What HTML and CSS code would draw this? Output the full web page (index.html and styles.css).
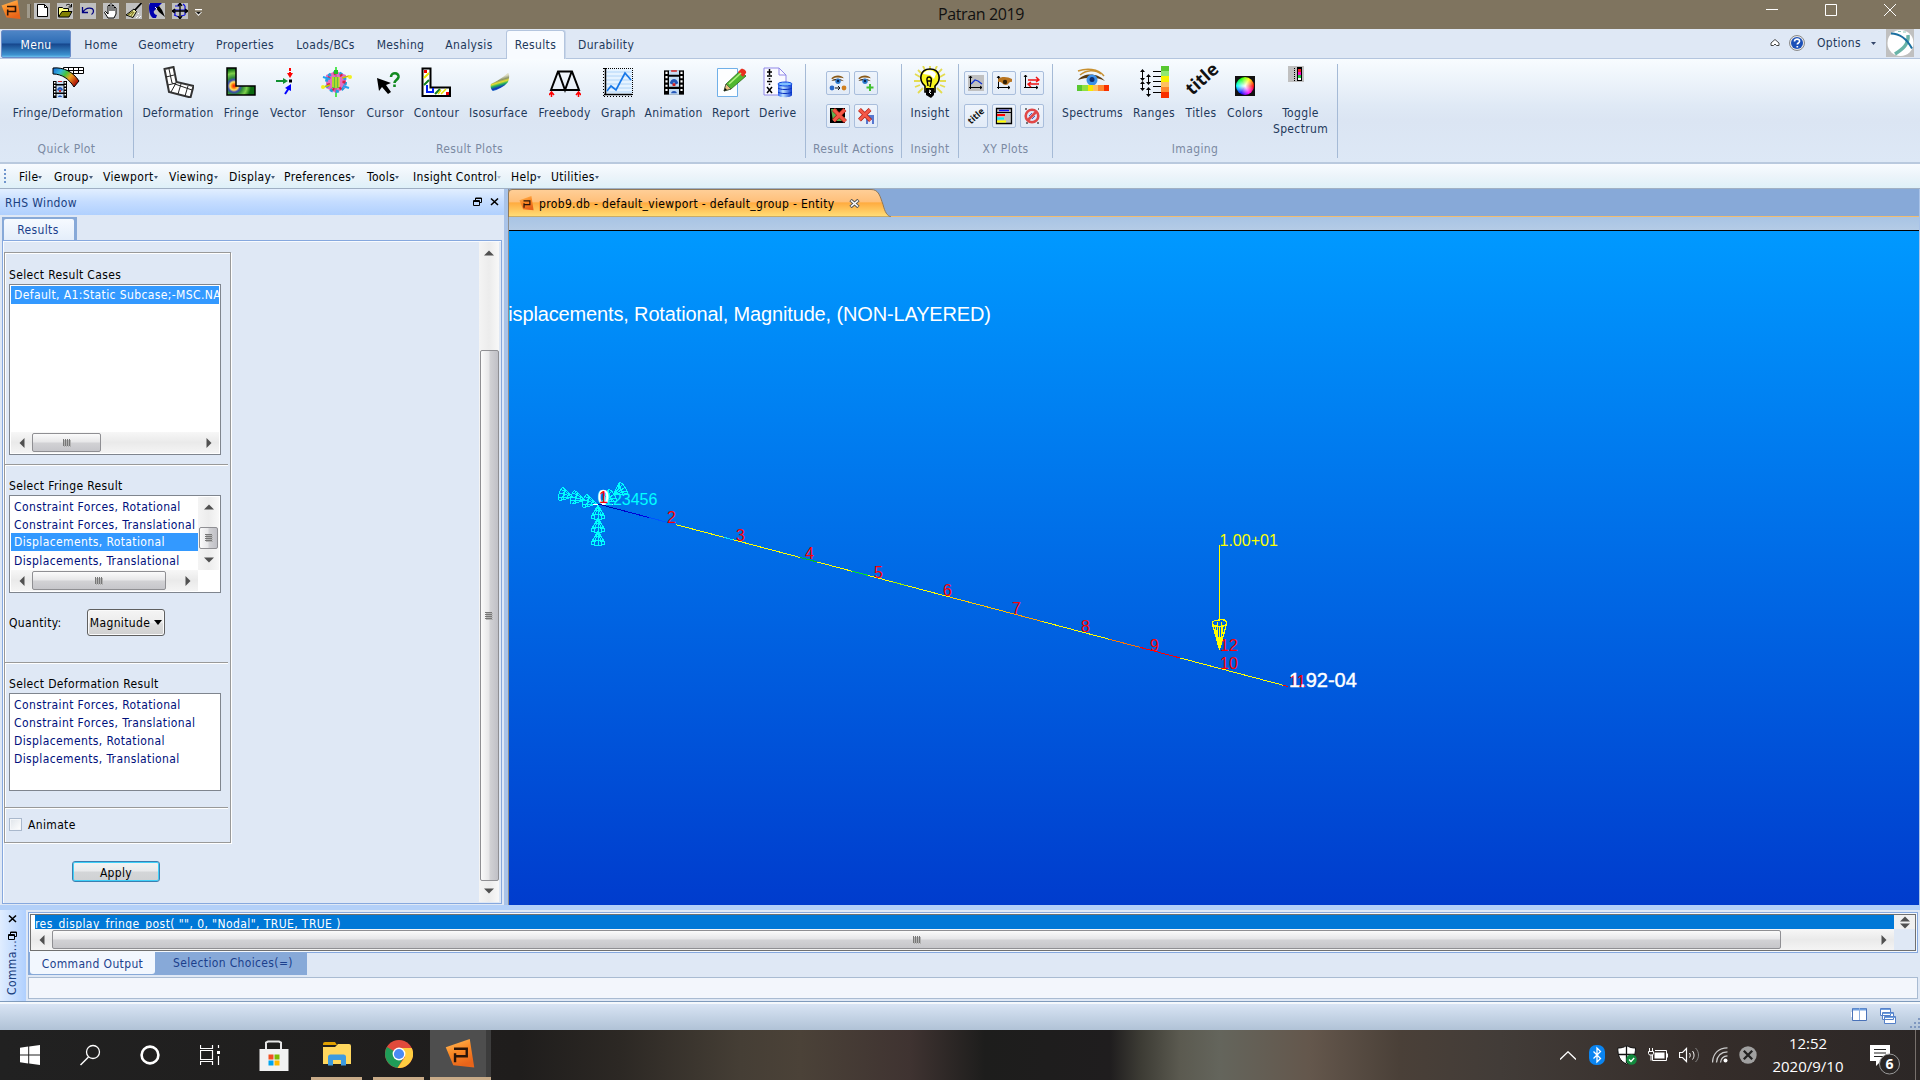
FILE: index.html
```html
<!DOCTYPE html>
<html lang="en">
<head>
<meta charset="utf-8">
<title>Patran 2019</title>
<link rel="stylesheet" href="styles.css">
</head>
<body>
<svg class="defs" width="0" height="0">
  <defs>
    <linearGradient id="orange" x1="0" y1="0" x2="0.4" y2="1"><stop offset="0" stop-color="#ffc060"/><stop offset=".5" stop-color="#fb8a26"/><stop offset="1" stop-color="#e8641a"/></linearGradient>
    <linearGradient id="rainbow" x1="0" y1="0" x2="1" y2=".6"><stop offset="0" stop-color="#1565d8"/><stop offset=".3" stop-color="#35b6d8"/><stop offset=".5" stop-color="#46c43a"/><stop offset=".7" stop-color="#f0a020"/><stop offset="1" stop-color="#b01808"/></linearGradient>
    <radialGradient id="fringe" gradientUnits="userSpaceOnUse" cx="9" cy="20" r="17"><stop offset="0" stop-color="#f01010"/><stop offset=".14" stop-color="#ff8a10"/><stop offset=".24" stop-color="#ffe060"/><stop offset=".36" stop-color="#3a4ab0"/><stop offset=".5" stop-color="#2f8a3a"/><stop offset=".75" stop-color="#7ed04a"/><stop offset="1" stop-color="#0c6a10"/></radialGradient>
    <linearGradient id="iso" x1=".2" y1="0" x2=".5" y2="1"><stop offset=".3" stop-color="#dcdcc4"/><stop offset=".45" stop-color="#8c9468"/><stop offset=".56" stop-color="#e8e030"/><stop offset=".68" stop-color="#20b060"/><stop offset=".82" stop-color="#1030c0"/><stop offset="1" stop-color="#30c0d0"/></linearGradient>
    <linearGradient id="db" x1="0" x2="1"><stop offset="0" stop-color="#2a62f0"/><stop offset=".35" stop-color="#c0e4ff"/><stop offset="1" stop-color="#0838d0"/></linearGradient>
    <symbol id="logo" viewBox="0 0 20 20"><path d="M0.500 5.500 16.500 0 19.500 19 5.500 17.500Z" fill="url(#orange)"/><path d="M6 6.500h8.500v5H6.700M6.700 9.500v6" fill="none" stroke="#2a1408" stroke-width="1.600"/></symbol>
    <symbol id="restore" viewBox="0 0 9 9"><path d="M2.500 3V1h6v4.500H6.500M.5 3.500h6v5h-6zM.5 4.500h6M2.500 1.500h6" fill="none" stroke="#000"/></symbol>
    <symbol id="close" viewBox="0 0 9 9"><path d="M1 1.500 8 8M8 1.500 1 8" stroke="#000" stroke-width="1.600"/></symbol>
    <symbol id="film" viewBox="0 0 14 17"><path d="M0 0h14v17H0z" fill="#000"/><path d="M3.500 0h7v3h-7zM3.500 4.500h7v7h-7zM3.500 13h7v4h-7z" fill="#c4dcf4"/><path d="M1 1h1.500v1.500H1zM1 4h1.500v1.500H1zM1 7h1.500v1.500H1zM1 10h1.500v1.500H1zM1 13h1.500v1.500H1zM11.500 1H13v1.500h-1.500zM11.500 4H13v1.500h-1.500zM11.500 7H13v1.500h-1.500zM11.500 10H13v1.500h-1.500zM11.500 13H13v1.500h-1.500z" fill="#fff"/><path d="M4 9c1-4 5-4 6 0l-2 1-1-2-1 2zM5 16c0-2 4-2 4 0z" fill="#2456b8"/><path d="M6 9h2v2H6zM5 0h4v1H5z" fill="#d02020"/></symbol>
    <symbol id="eye" viewBox="0 0 16 12"><path d="M0 4C3 0 12-1 15 4 11 3 5 2 1 5z" fill="#8a5a18"/><path d="M0 7C3 3.500 12 3.500 15 7.500 11 6 5 6 0 7z" fill="#4a2c08"/><circle cx="8" cy="7.500" r="3.200" fill="#2c7ad0"/><circle cx="8" cy="7.200" r="1.400" fill="#082048"/></symbol>
    <symbol id="redx" viewBox="0 0 14 14"><path d="M1.500 1.500 12.500 12.500M12 1.500 1.500 12" stroke="#a81c10" stroke-width="4"/><path d="M1.500 1.500 12.500 12.500M12 1.500 1.500 12" stroke="#f45848" stroke-width="2.800"/></symbol>
    <symbol id="arl" viewBox="0 0 6 10"><path d="M5.500 0v10L.5 5z" fill="#505050"/></symbol>
    <symbol id="arr" viewBox="0 0 6 10"><path d="M.5 0v10l5-5z" fill="#505050"/></symbol>
    <symbol id="aru" viewBox="0 0 10 6"><path d="M0 5.500h10L5 .5z" fill="#505050"/></symbol>
    <symbol id="ard" viewBox="0 0 10 6"><path d="M0 .5h10l-5 5z" fill="#505050"/></symbol>
    <symbol id="griph" viewBox="0 0 8 8"><path d="M.5 0v7M2.500 0v7M4.500 0v7M6.500 0v7" stroke="#777"/><path d="M1.500 1v7M3.500 1v7M5.500 1v7M7.500 1v7" stroke="#a8a8a8" stroke-width=".8"/></symbol>
    <symbol id="gripv" viewBox="0 0 8 8"><path d="M0 .5h7M0 2.500h7M0 4.500h7M0 6.500h7" stroke="#777"/><path d="M1 1.500h7M1 3.500h7M1 5.500h7M1 7.500h7" stroke="#a8a8a8" stroke-width=".8"/></symbol>
  </defs>
</svg>

<header class="titlebar">
  <svg class="app-logo" width="20" height="20"><use href="#logo"/></svg>
  <div class="quick">
    <svg width="16" height="16" viewBox="0 0 16 16"><path d="M0 0h16v16H0z" fill="#c0c0c0"/><path d="M3.500 1.500h7l3 3v9h-10z" fill="#fff" stroke="#000"/><path d="M10.500 1.500v3h3" fill="none" stroke="#000"/></svg>
    <svg width="16" height="16" viewBox="0 0 16 16"><path d="M0 0h16v16H0z" fill="#c0c0c0"/><path d="M1.500 13.500V4.500h4l1 1h5v3" fill="#ffff80" stroke="#000"/><path d="M1.500 14 5 8.500h10L12 14z" fill="#808000" stroke="#000"/><path d="M9 2.500c2-2 4-1 5 1M14.500 1v3h-3" fill="none" stroke="#000"/></svg>
    <svg width="16" height="16" viewBox="0 0 16 16"><path d="M0 0h16v16H0z" fill="#c0c0c0"/><path d="M2.500 4v5.500H8M3 9C6 4 13 4 13.500 8c0 2-1 3-2 3.500" fill="none" stroke="#000080" stroke-width="1.300"/></svg>
    <svg width="16" height="16" viewBox="0 0 16 16"><path d="M0 0h16v16H0z" fill="#c0c0c0"/><path d="M5 15 1.500 9.500l1-1L5 11V3l1-1 1 1V1.500l1-1 1 1V3l1-1 1 1v2l1-1 1 1v6l-2 4z" fill="#fff" stroke="#000"/><path d="M7 3v5M9 3v5M11 5v3" stroke="#000"/></svg>
    <svg width="16" height="16" viewBox="0 0 16 16"><path d="M0 0h16v16H0z" fill="#c0c0c0"/><path d="M15.500 0 9 7" stroke="#000" stroke-width="1.800"/><path d="M8 6l2.500 2.500L7 14.500 0 12z" fill="#e8e8a0" stroke="#000"/><path d="M2 12l5-3.500M4.500 13.500 8 9" stroke="#807820" stroke-width="1.200"/><path d="M10 15l2-2M13 15l2-2M12 11l1-1" stroke="#fff"/></svg>
    <svg width="16" height="16" viewBox="0 0 16 16"><path d="M0 0h16v16H0z" fill="#c0c0c0"/><path d="M1 0h12L5 8c-1 2 1 4 3 4l-1 3H4C0 13-1 3 1 0z" fill="#0000b0"/><path d="M7 5l3-2 3 4 3 7-6-5z" fill="#000"/><path d="M6 4l2 2" stroke="#fff"/></svg>
    <svg width="16" height="16" viewBox="0 0 16 16"><path d="M0 0h16v16H0z" fill="#c0c0c0"/><path d="M3 3h4l-1-2M3 7h11M13 3v9M3 12V6M9 13l4-1M2 12l5 2M11 1l2 2" stroke="#1010e0" fill="none" stroke-width="1.200"/><path d="M8 0v16M0 8h16M6 3l2-3 2 3M6 13l2 3 2-3M3 6 0 8l3 2M13 6l3 2-3 2" stroke="#000" fill="none" stroke-width="1.300"/></svg>
    <svg class="quick-more" width="7" height="8" viewBox="0 0 7 8"><path d="M0 .5h7" stroke="#fff" stroke-width="1.500"/><path d="M0 3h7L3.500 7z" fill="#fff"/><path d="M1 3h5L3.500 5.500z" fill="#111"/></svg>
  </div>
  <div class="app-title">Patran 2019</div>
  <div class="winbtns">
    <svg width="12" height="12" viewBox="0 0 12 12"><path d="M0 5.500h12" stroke="#fff"/></svg>
    <svg width="12" height="12" viewBox="0 0 12 12"><path d="M.5.5h11v11H.5z" stroke="#fff" fill="none"/></svg>
    <svg width="12" height="12" viewBox="0 0 12 12"><path d="M0 0 12 12M12 0 0 12" stroke="#fff"/></svg>
  </div>
</header>

<nav class="tabs">
  <div class="tab-menu">Menu</div>
  <div class="tab-list">
    <span class="w32">Home</span><span class="w55">Geometry</span><span class="w58">Properties</span><span class="w59">Loads/BCs</span><span class="w47">Meshing</span><span class="w46">Analysis</span>
  </div>
  <div class="tab-active">Results</div>
  <span class="tab-last">Durability</span>
  <div class="tab-right">
    <svg width="10" height="8" viewBox="0 0 10 8"><path d="M1 6.500V4l4-3.500L9 4v2.500H6.500L5 5 3.500 6.500z" fill="#fff" stroke="#444"/></svg>
    <svg class="help" width="16" height="16" viewBox="0 0 16 16"><circle cx="8" cy="8" r="7.500" fill="#e8e8e8" stroke="#8a8a8a"/><circle cx="8" cy="8" r="6" fill="#1c50b8"/><path d="M5.500 6.500C5.500 3 11 3.500 10.500 6.500 10.300 8 8.300 8 8.300 9.500M8.300 11v1.500" fill="none" stroke="#fff" stroke-width="1.700"/></svg>
    <span class="options">Options</span>
    <svg class="opt-arrow" width="5" height="3" viewBox="0 0 5 3"><path d="M0 0h5L2.500 3z" fill="#34466a"/></svg>
    <svg width="28" height="28" viewBox="0 0 28 28"><path d="M0 0h28v28H0z" fill="#c0c0c0"/><circle cx="14.500" cy="14" r="13" fill="#fff"/><path d="M9 25c8-5 14-10 13-19" fill="none" stroke="#6ab4a8" stroke-width="3.500"/><path d="M5 4.500c8 0 15 4 21 15" fill="none" stroke="#1a6fa0" stroke-width="2"/><path d="M12 2.500h3M17 3h3" stroke="#8cc8b8"/></svg>
  </div>
</nav>

<section class="ribbon">
  <div class="group g1">
    <div class="items">
      <div class="item w110">
        <svg width="32" height="32" viewBox="0 0 32 32"><path d="M11.500 1.500h20v6h-20zM11.500 4.500h20M16.500 1.500v6M21.500 1.500v6M26.500 1.500v6" fill="#fff" stroke="#000"/><path d="M1 2c11-1 20 4 26 13l-5 6C17 13 10 8 1 8z" fill="url(#rainbow)" stroke="#000"/><svg x="1" y="15" width="14" height="17"><use href="#film"/></svg></svg>
        <span>Fringe/Deformation</span>
      </div>
    </div>
    <div class="caption">Quick Plot</div>
  </div>
  <div class="group g2">
    <div class="items">
      <div class="item w70"><svg width="32" height="32" viewBox="0 0 32 32"><path d="M2.500 3 11.500 1l3 15 17 4-3 11.500L7 26z" fill="#fff" stroke="#333" stroke-width="2"/><path d="M4 11l8-2M6 19l8-2M7 3l3 14 20 7M9 26l5-9M16 28l3-10M23 30l3-10" fill="none" stroke="#222"/></svg><span>Deformation</span></div>
      <div class="item w37"><svg width="32" height="32" viewBox="0 0 32 32"><path d="M2 2h9v18h19v9H2z" fill="url(#fringe)" stroke="#000" stroke-width="1.500"/></svg><span>Fringe</span></div>
      <div class="item w37"><svg width="32" height="32" viewBox="0 0 32 32"><path d="M18 2v6" stroke="#f00" stroke-width="2" stroke-dasharray="3 1"/><path d="M15 7h6l-3 5z" fill="#f00"/><path d="M4 15h8" stroke="#109030" stroke-width="2"/><path d="M11 12v6l5-3z" fill="#109030"/><path d="M17 13.500h3v3h-3z"/><path d="M13 28l4-6" stroke="#00f" stroke-width="2"/><path d="M13 22l6-4 0 7z" fill="#00f"/></svg><span>Vector</span></div>
      <div class="item w40"><svg width="32" height="32" viewBox="0 0 32 32"><path d="M16 1v30" stroke="#20e020" stroke-width="1.500"/><path d="M16 5l10 4v13l-10 5-10-5V9z" fill="#e040b0" opacity=".75"/><circle cx="16" cy="16" r="9.500" fill="none" stroke="#20a0e0" stroke-width="3" stroke-dasharray="3 3"/><circle cx="16" cy="15.500" r="8" fill="none" stroke="#e02040" stroke-width="3" stroke-dasharray="2 5"/><path d="M12 11h7v11h-7z" fill="#60c040"/><path d="M13 11v10M16 11v11M19 11v10" stroke="#e8e820" stroke-width="1.200"/><path d="M4 21l6-2M22 12l7-2" stroke="#d0c000" stroke-width="1.500"/><circle cx="3" cy="21" r="2" fill="#f0f020"/><circle cx="30" cy="11" r="2" fill="#f0f020"/><path d="M3 11l7 2M23 20l6 2" stroke="#20a0f0" stroke-width="2"/><path d="M14 4h4v4h-4z" fill="#20c020"/></svg><span>Tensor</span></div>
      <div class="item w38"><svg width="32" height="32" viewBox="0 0 32 32"><path d="M8 12l14 5-5 2 5 7-3 2-6-7-3 4z"/><path d="M22 11c0-5 8-5 7.500 0-.5 3-4 3-4 6M25.500 18.500v2.500" fill="none" stroke="#128a20" stroke-width="2.600"/></svg><span>Cursor</span></div>
      <div class="item w45"><svg width="32" height="32" viewBox="0 0 32 32"><path d="M2.500 2.500h8v19h19.500v8.500H2.500z" fill="#fff" stroke="#000" stroke-width="2"/><path d="M4 12l5-5" stroke="#e8e800" stroke-width="2"/><path d="M4 19l5-5M15 28l5-5" stroke="#108020" stroke-width="2"/><path d="M21 28l5-5M18 28l3-4" stroke="#e8e800" stroke-width="1.500"/><path d="M7 19v7h6v-4" stroke="#0020f0" stroke-width="2" fill="none"/><path d="M4 4h3v3H4zM26 26h3v3h-3z" fill="#e00"/></svg><span>Contour</span></div>
      <div class="item w59"><svg width="32" height="32" viewBox="0 0 32 32"><path d="M9 18C14 16 21 11 26 7c2 1 1 7 0 9-4 5-11 8-15 9-2-1-3-5-2-7z" fill="url(#iso)"/></svg><span>Isosurface</span></div>
      <div class="item w54"><svg width="32" height="32" viewBox="0 0 32 32"><path d="M2 24 9 5.500h14L30 24zM9.500 6 16 24l6.500-18" fill="none" stroke="#000" stroke-width="2"/><path d="M2.500 31v-5M0 29l2.500-3L5 29M29.500 31v-5M27 29l2.500-3 2.500 3" fill="none" stroke="#f00" stroke-width="1.500"/></svg><span>Freebody</span></div>
      <div class="item w34"><svg width="32" height="32" viewBox="0 0 32 32"><path d="M4 3h26v25H4z" fill="#e6f3ff"/><path d="M4 6h26M4 10h26M4 14h26M4 18h26M4 22h26M4 26h26" stroke="#b0d4f8"/><path d="M3.500 2v27M2 28.500h28" stroke="#000" stroke-width="1.500"/><path d="M2 2.500h29M30.500 2v28" stroke="#000" stroke-dasharray="1 1"/><path d="M2 30.500h29M1.500 2v28" stroke="#000" stroke-dasharray="1 2"/><path d="M5 25l4-5 5 4 9-17 6 7" fill="none" stroke="#1878e8" stroke-width="1.700"/></svg><span>Graph</span></div>
      <div class="item w57"><svg width="32" height="32" viewBox="0 0 32 32"><svg x="6" y="4" width="20" height="25"><use href="#film"/></svg></svg><span>Animation</span></div>
      <div class="item w38"><svg width="32" height="32" viewBox="0 0 32 32"><path d="M2.500 2.500h20v28h-20z" fill="#fdfeff" stroke="#70b0e8"/><path d="M9 25l2-7L25 5l6 5L16 23z" fill="#50b830" stroke="#2a6a18" stroke-width=".8"/><path d="M9 25l2-7 5 5z" fill="#e8c080" stroke="#444" stroke-width=".7"/><path d="M23 6l3-3c2-1 6 2 5 4l-3 4z" fill="#e83020"/><path d="M14 18 26 7" stroke="#b0f080" stroke-width="1.600"/><path d="M9 25l1-3 2 2z"/></svg><span>Report</span></div>
      <div class="item w36"><svg width="32" height="32" viewBox="0 0 32 32"><path d="M2 2h15l7 7v20H2z" fill="#fafaff" stroke="#9088e8"/><path d="M17 2v7h7" fill="none" stroke="#9088e8"/><path d="M5 6h5M7.500 3v6M5 10h5M5 15.500h5M7.500 12v1.500M7.500 17.500V19M5 21l5 6M10 21l-5 6" stroke="#000" stroke-width="1.500"/><path d="M16 18v11c0 3 14 3 14 0V18z" fill="url(#db)"/><path d="M16 22c2 2 12 2 14 0M16 26c2 2 12 2 14 0" fill="none" stroke="#0830c0"/><ellipse cx="23" cy="18" rx="7" ry="2" fill="#80c0ff" stroke="#1048e0"/></svg><span>Derive</span></div>
    </div>
    <div class="caption">Result Plots</div>
  </div>
  <div class="group g3">
    <div class="minis two">
      <div class="mini"><svg width="18" height="18" viewBox="0 0 18 18"><svg x="2" y="1" width="14" height="10"><use href="#eye"/></svg><circle cx="3" cy="14" r="2.400" fill="#2868c8"/><circle cx="15" cy="14" r="2.400" fill="#d08020"/><path d="M6 14h5M9 12l2 2-2 2" stroke="#111" fill="none"/></svg></div>
      <div class="mini"><svg width="18" height="18" viewBox="0 0 18 18"><svg x="1" y="1" width="14" height="10"><use href="#eye"/></svg><path d="M13 10v7M9.500 13.500h7" stroke="#40c030" stroke-width="2"/></svg></div>
      <div class="mini"><svg width="18" height="18" viewBox="0 0 18 18"><path d="M1 1h15v15H1z"/><path d="M2 2h6v8h8v4H4z" fill="#60b050"/><svg x="3" y="1" width="15" height="15"><use href="#redx"/></svg></svg></div>
      <div class="mini"><svg width="18" height="18" viewBox="0 0 18 18"><path d="M9 8h8v9H9z" fill="#5878d0"/><path d="M11 13h4v4h-4z" fill="#e0e8ff"/><svg x="1" y="1" width="14" height="14"><use href="#redx"/></svg></svg></div>
    </div>
    <div class="caption">Result Actions</div>
  </div>
  <div class="group g4">
    <div class="items">
      <div class="item w38"><svg width="32" height="32" viewBox="0 0 32 32"><path d="M4 4l5 5M28 3l-5 5M0 15h6M26 15h6M4 27l5-5M28 27l-5-5M16 0v3M9 0l2 4M23 0l-2 4M1 8l5 3M31 8l-5 3M1 21l5-2M31 21l-5-2" stroke="#e4dc50" stroke-width="1.800"/><path d="M11 20c-7-6-5-17 5-17s12 11 5 17v6H11z" fill="#f8f420" stroke="#000" stroke-width="1.600"/><path d="M9 8c3-5 10-5 13 0l-2 5-4-4z" fill="#fff"/><path d="M14 20c0-3-3-9 1-9s2 6 1 10M13 15h4" fill="none" stroke="#000" stroke-width="1.400"/><path d="M12 22h8v7l-3 3-5-3z"/><path d="M15 24l2 1-2 1 2 2" fill="none" stroke="#fff"/></svg><span>Insight</span></div>
    </div>
    <div class="caption">Insight</div>
  </div>
  <div class="group g5">
    <div class="minis three">
      <div class="mini"><svg width="18" height="18" viewBox="0 0 18 18"><path d="M1 1h16v16H1z" fill="#c0c0c0"/><path d="M3.500 2v13M2 13.500h13M2 4l1.500-2L5 4M13 12l2 1.500L13 15" fill="none" stroke="#000"/><path d="M4 10l4-4 3 1 4 3" fill="none" stroke="#1030d0" stroke-width="1.300"/></svg></div>
      <div class="mini"><svg width="18" height="18" viewBox="0 0 18 18"><path d="M3.500 2v13M2 13.500h13M2 4l1.500-2L5 4M13 12l2 1.500L13 15" fill="none" stroke="#000"/><path d="M3 5c4-3 10-2 14 0v3c-3-1-3 3-6 3-4 0-4-4-8-3z" fill="#b87420"/><circle cx="10" cy="8" r="2.200" fill="#302008"/></svg></div>
      <div class="mini"><svg width="18" height="18" viewBox="0 0 18 18"><path d="M2.500 1v13M1 13.500h14M1 3l1.500-2L4 3M13 12l2 1.500L13 15" fill="none" stroke="#000"/><path d="M5 6h10M13 3l3 3-3 2M16 10H6M8 8l-3 2 3 3" fill="none" stroke="#f01010" stroke-width="1.400"/></svg></div>
      <div class="mini"><svg class="spill" width="18" height="18" viewBox="0 0 18 18"><text class="icon-text small" x="9" y="12" text-anchor="middle" transform="rotate(-42 9 9)">title</text></svg></div>
      <div class="mini"><svg width="18" height="18" viewBox="0 0 18 18"><path d="M1.500 1.500h15v15h-15z" fill="#c0c0c0" stroke="#000" stroke-width="1.300"/><path d="M4 3.500h10" stroke="#1010f0" stroke-width="1.500"/><path d="M2 5.500h14" stroke="#000"/><path d="M2 8h8" stroke="#f00" stroke-width="2"/><path d="M2 11.500h7" stroke="#0ef" stroke-width="2"/><path d="M2 14.500h9" stroke="#ff0" stroke-width="2"/></svg></div>
      <div class="mini"><svg width="18" height="18" viewBox="0 0 18 18"><path d="M2 2h2M3 16h2M14 16h2M15 2h1" stroke="#000"/><circle cx="9" cy="9" r="6.300" fill="#dce8f8" stroke="#e04848" stroke-width="2.600"/><path d="M5 13l8-8" stroke="#e04848" stroke-width="2.600"/><path d="M6 9l3-3M9 12l3-3" stroke="#4060c0"/></svg></div>
    </div>
    <div class="caption">XY Plots</div>
  </div>
  <div class="group g6">
    <div class="items">
      <div class="item w61"><svg width="32" height="32" viewBox="0 0 32 32"><path d="M1 5c8-3 20-3 26 5M3 9C9 4 18 3 24 8" fill="none" stroke="#c89030" stroke-width="1.500"/><path d="M1 14C6 7 20 6 28 15 20 11 10 11 1 14z" fill="#5a3a10"/><circle cx="15" cy="14" r="5.500" fill="#3c90e8"/><circle cx="15" cy="13.500" r="2.500" fill="#0c2c70"/><path d="M0 19h5v6H0z" fill="#58c830"/><path d="M5 19h6v6H5z" fill="#90e040"/><path d="M11 19h5v6h-5z" fill="#f8e800"/><path d="M16 19h5v6h-5z" fill="#ffc060"/><path d="M21 19h6v6h-6z" fill="#ff8830"/><path d="M27 19h5v6h-5z" fill="#f83000"/></svg><span>Spectrums</span></div>
      <div class="item w42"><svg width="32" height="32" viewBox="0 0 32 32"><path d="M4.500 5v7M4.500 17v7M10.500 10v7M10.500 23v7M15 5.500h8M15 10.500h8M15 15.500h8M15 20.500h8M15 26.500h8" stroke="#000"/><path d="M2 6l2.500-3L7 6zM2 12l2.500 3L7 12zM2 18l2.500-3L7 18zM2 22l2.500 3L7 22zM8 11l2.500-3 2.500 3zM8 16l2.500 3 2.500-3zM8 24l2.500-3 2.500 3zM8 28l2.500 3 2.500-3z"/><path d="M23 0h8v5h-8z" fill="#58c830"/><path d="M23 5h8v5h-8z" fill="#90e870"/><path d="M23 10h8v6h-8z" fill="#f8f000"/><path d="M23 16h8v5h-8z" fill="#ffc060"/><path d="M23 21h8v5h-8z" fill="#ff8830"/><path d="M23 26h8v6h-8z" fill="#f83000"/></svg><span>Ranges</span></div>
      <div class="item w32"><svg class="spill" width="32" height="32" viewBox="0 0 32 32"><text class="icon-text" x="17" y="19" text-anchor="middle" transform="rotate(-42 17 13)">title</text></svg><span>Titles</span></div>
      <div class="item w36"><div class="wheelbox"><div class="wheel"></div></div><span>Colors</span></div>
      <div class="item w55"><svg width="32" height="32" viewBox="0 0 32 32"><path d="M3 0h16v16H3z" fill="#c0c0c0"/><path d="M9.500 2v13" stroke="#000" stroke-dasharray="1 1"/><path d="M12 1h5v14h-5z"/><path d="M13 3h3v3h-3z" fill="#f02020"/><path d="M13 6h3v3h-3z" fill="#f0c"/><path d="M13 9h3v3h-3z" fill="#2c4"/><path d="M13 12h3v2h-3z" fill="#fff"/></svg><span>Toggle<br>Spectrum</span></div>
    </div>
    <div class="caption">Imaging</div>
  </div>
</section>

<nav class="menubar">
  <i class="grip"></i>
  <span class="w35">File<b></b></span><span class="w49">Group<b></b></span><span class="w66">Viewport<b></b></span><span class="w60">Viewing<b></b></span><span class="w55">Display<b></b></span><span class="w83">Preferences<b></b></span><span class="w46">Tools<b></b></span><span class="w98 pale">Insight Control<b></b></span><span class="w40">Help<b></b></span><span class="w55">Utilities<b></b></span>
</nav>

<main class="work">
  <aside class="panel">
    <div class="panel-head"><span>RHS Window</span><svg width="9" height="9"><use href="#restore"/></svg><svg width="9" height="9"><use href="#close"/></svg></div>
    <div class="panel-tab"><div>Results</div></div>
    <div class="panel-body">
      <div class="form-col">
        <div class="frame">
          <section class="sec s1">
            <label>Select Result Cases</label>
            <div class="listbox l1">
              <div class="row sel">Default, A1:Static Subcase;-MSC.NASTRAN</div>
              <div class="hscroll"><svg width="6" height="10"><use href="#arl"/></svg><div class="thumb t1"><svg width="8" height="8"><use href="#griph"/></svg></div><svg class="end" width="6" height="10"><use href="#arr"/></svg></div>
            </div>
          </section>
          <section class="sec s2">
            <label>Select Fringe Result</label>
            <div class="listbox l2">
              <div class="rows"><div class="row">Constraint Forces, Rotational</div><div class="row">Constraint Forces, Translational</div><div class="row sel">Displacements, Rotational</div><div class="row">Displacements, Translational</div></div>
              <div class="vscroll"><svg width="10" height="6"><use href="#aru"/></svg><div class="thumb"><svg width="8" height="8"><use href="#gripv"/></svg></div><svg width="10" height="6"><use href="#ard"/></svg></div>
              <div class="hscroll"><svg width="6" height="10"><use href="#arl"/></svg><div class="thumb t2"><svg width="8" height="8"><use href="#griph"/></svg></div><svg class="end" width="6" height="10"><use href="#arr"/></svg></div>
            </div>
            <div class="quantity"><label>Quantity:</label><button class="combo">Magnitude<svg width="8" height="5" viewBox="0 0 8 5"><path d="M0 0h8L4 5z"/></svg></button></div>
          </section>
          <section class="sec s3">
            <label>Select Deformation Result</label>
            <div class="listbox l3"><div class="row">Constraint Forces, Rotational</div><div class="row">Constraint Forces, Translational</div><div class="row">Displacements, Rotational</div><div class="row">Displacements, Translational</div></div>
          </section>
          <section class="sec s4"><i class="check"></i><span>Animate</span></section>
        </div>
        <button class="apply">Apply</button>
      </div>
      <div class="panel-scroll"><svg width="10" height="6"><use href="#aru"/></svg><div class="thumb"><svg width="8" height="8"><use href="#gripv"/></svg></div><svg width="10" height="6"><use href="#ard"/></svg></div>
    </div>
  </aside>
  <section class="viewport">
    <div class="doc-tabs">
      <div class="doc-tab">
        <svg class="doc-shape" width="384" height="28" viewBox="0 0 384 28"><defs><linearGradient id="tabg" x1="0" x2="0" y1="0" y2="1"><stop offset="0" stop-color="#ffcf98"/><stop offset=".46" stop-color="#ffbf78"/><stop offset=".48" stop-color="#ffab3f"/><stop offset="1" stop-color="#ffe07a"/></linearGradient></defs><path d="M.5 28V4Q.5.500 4 .5H363c8 0 9 7 12 15 2 8 4 11 8 12.500z" fill="url(#tabg)" stroke="#907858"/></svg>
        <svg width="15" height="15"><use href="#logo"/></svg>
        <span>prob9.db - default_viewport - default_group - Entity</span>
        <svg class="doc-x" width="11" height="9" viewBox="0 0 11 9"><path d="M1.500 1 9.500 8M9.500 1 1.500 8" stroke="#555" stroke-width="3.400"/><path d="M2 1.500 9 7.500M9 1.500 2 7.500" stroke="#fff" stroke-width="1.600"/></svg>
      </div>
    </div>
    <div class="doc-strip"></div>
    <svg class="scene" width="1410" height="674" viewBox="509 231 1410 674">
      <defs>
        <linearGradient id="beam" gradientUnits="userSpaceOnUse" x1="598" y1="0" x2="1288" y2="0">
          <stop offset="0" stop-color="#0000a0"/><stop offset=".03" stop-color="#0000c0"/><stop offset=".074" stop-color="#0000e8"/><stop offset=".074" stop-color="#0050ff"/><stop offset=".113" stop-color="#0060ff"/><stop offset=".113" stop-color="#ff0"/><stop offset=".183" stop-color="#ff0"/><stop offset=".183" stop-color="#00e0ff"/><stop offset=".196" stop-color="#00e0ff"/><stop offset=".196" stop-color="#ff0"/><stop offset=".293" stop-color="#ff0"/><stop offset=".293" stop-color="#00c020"/><stop offset=".317" stop-color="#00c020"/><stop offset=".317" stop-color="#ff0"/><stop offset=".368" stop-color="#ff0"/><stop offset=".368" stop-color="#00e820"/><stop offset=".391" stop-color="#00e820"/><stop offset=".391" stop-color="#ff0"/><stop offset=".428" stop-color="#ff0"/><stop offset=".428" stop-color="#a0f000"/><stop offset=".448" stop-color="#a0f000"/><stop offset=".448" stop-color="#ff0"/><stop offset=".51" stop-color="#ff0"/><stop offset=".51" stop-color="#ffd000"/><stop offset=".59" stop-color="#ffc000"/><stop offset=".6" stop-color="#ffa000"/><stop offset=".643" stop-color="#ffa000"/><stop offset=".643" stop-color="#ff0"/><stop offset=".74" stop-color="#ff0"/><stop offset=".74" stop-color="#ff7800"/><stop offset=".785" stop-color="#ff7000"/><stop offset=".785" stop-color="#f00"/><stop offset=".843" stop-color="#f00"/><stop offset=".843" stop-color="#ff0"/><stop offset=".993" stop-color="#ff0"/><stop offset=".993" stop-color="#f00"/>
        </linearGradient>
        <g id="cone" fill="none" stroke="#0ff"><path d="M0 0-7 12M0 0-4 14M0 0v15M0 0 4 14M0 0 7 12M-7 12c0 3 14 3 14 0M-7 12c2-3 12-3 14 0M-5 9h10M-3 5h6"/></g>
      </defs>
      <text x="494" y="321" class="scene-title" textLength="497">Displacements, Rotational, Magnitude, (NON-LAYERED)</text>
      <g shape-rendering="crispEdges">
        <use href="#cone" transform="translate(598 505)"/><use href="#cone" transform="translate(598 518)"/><use href="#cone" transform="translate(598 531)"/>
        <use href="#cone" transform="translate(597 504) rotate(105)"/><use href="#cone" transform="translate(585 500.500) rotate(105)"/><use href="#cone" transform="translate(573 497) rotate(105)"/>
        <use href="#cone" transform="translate(602 502) rotate(238)"/><use href="#cone" transform="translate(613 495) rotate(238)"/>
        <path d="M593 504.500h20" stroke="#fff"/>
      </g>
      <text x="604" y="505" class="load cyan">123456</text>
      <path d="M598 504 1288 686.500" stroke="url(#beam)" stroke-width="1" shape-rendering="crispEdges"/>
      <text x="597.500" y="504" class="value">0</text>
      <g class="nodes"><text x="599" y="503">1</text><text x="667" y="523">2</text><text x="736" y="541">3</text><text x="805" y="559">4</text><text x="874" y="577.500">5</text><text x="943" y="596">6</text><text x="1012" y="614">7</text><text x="1081" y="632">8</text><text x="1150" y="651">9</text><text x="1220" y="669">10</text><text x="1220" y="651">12</text><text x="1289" y="687">11</text></g>
      <path d="M1219.500 545v75" stroke="#ff0" shape-rendering="crispEdges"/>
      <path d="M1219.500 649.500 1212.500 624M1219.500 649.500 1215 626M1219.500 649.500V627M1219.500 649.500 1223 626M1219.500 649.500 1226.500 624M1212.500 622.500c0 5 14 5 14 0s-14-2-14 0M1217.500 622v14M1221.500 622v14" fill="none" stroke="#ff0" stroke-width="1.300" shape-rendering="crispEdges"/>
      <path d="M1216 637h7l-3.500 13z" fill="#ff0"/>
      <text x="1219.500" y="546" class="load yellow">1.00+01</text>
      <text x="1289" y="687" class="value">1.92-04</text>
    </svg>
  </section>
</main>

<section class="dock">
  <div class="dock-side"><svg width="9" height="9"><use href="#close"/></svg><svg width="9" height="9"><use href="#restore"/></svg><span>Comma...</span></div>
  <div class="dock-main">
    <div class="out-outer"><div class="output">
      <div class="out-line">res_display_fringe_post( "", 0, "Nodal", TRUE, TRUE )</div>
      <div class="out-spin"><svg width="10" height="6"><use href="#aru"/></svg><svg width="10" height="6"><use href="#ard"/></svg></div>
      <div class="hscroll"><svg width="6" height="10"><use href="#arl"/></svg><div class="thumb t3"><svg width="8" height="8"><use href="#griph"/></svg></div><svg class="end" width="6" height="10"><use href="#arr"/></svg></div>
    </div></div>
    <div class="dock-tabs"><div class="dt-active">Command Output</div><div class="dt">Selection Choices(=)</div></div>
    <div class="cmd-input"></div>
  </div>
</section>

<footer class="status">
  <svg width="15" height="13" viewBox="0 0 15 13"><path d="M.5.5h14v12H.5z" fill="#fff" stroke="#4a72b8"/><path d="M1 1.500h13" stroke="#6fa0e0" stroke-width="2"/><path d="M7.500 0v12" stroke="#8fb0e0"/></svg>
  <svg width="16" height="16" viewBox="0 0 16 16"><g fill="#fff" stroke="#5580c8"><path d="M.5.5h10v7H.5zM2.500 4.500h11v7h-11zM4.500 8.500h11v7h-11z"/></g><path d="M1 1.500h9M3 5.500h10M5 9.500h10" stroke="#6fa0e0"/></svg>
  <svg class="resize" width="11" height="10" viewBox="0 0 11 10"><path d="M9 0h2v2H9zM5 4h2v2H5zM9 4h2v2H9zM1 8h2v2H1zM5 8h2v2H5zM9 8h2v2H9z" fill="#7f98c0"/></svg>
</footer>

<footer class="taskbar">
  <div class="task w60"><svg width="20" height="20" viewBox="0 0 20 20"><path d="M0 2.700 8.200 1.600v7.900H0zM9.200 1.400 20 0v9.500H9.200zM0 10.500h8.200v7.900L0 17.300zM9.200 10.500H20V20L9.200 18.600z" fill="#fff"/></svg></div>
  <div class="task w60"><svg width="22" height="22" viewBox="0 0 22 22"><circle cx="14" cy="8" r="6.500" fill="none" stroke="#fff" stroke-width="1.300"/><path d="M9.500 13 1.500 21" stroke="#fff" stroke-width="1.400"/></svg></div>
  <div class="task w60"><svg width="20" height="20" viewBox="0 0 20 20"><circle cx="10" cy="10" r="8.400" fill="none" stroke="#fff" stroke-width="2.600"/></svg></div>
  <div class="task w60"><svg width="20" height="20" viewBox="0 0 20 20"><path d="M.5 0v3.500h12V0M.5 5.500h12v9H.5zM.5 20v-3.500h12V20M18.500 0v3M18.500 11v9" fill="none" stroke="#fff" stroke-width="1.200"/><path d="M17 6h3v3h-3z" fill="#fff"/></svg></div>
  <div class="task store"><svg width="30" height="31" viewBox="0 0 30 31"><path d="M7 9V2.500L9 1.500h11l2 1V9" fill="none" stroke="#e8e8e8" stroke-width="2"/><path d="M.5 9h29v22H.5z" fill="#f2f2f2"/><path d="M9.500 14.500h5v5h-5z" fill="#f25022"/><path d="M15.500 14.500h5v5h-5z" fill="#7fba00"/><path d="M9.500 20.500h5v5h-5z" fill="#00a4ef"/><path d="M15.500 20.500h5v5h-5z" fill="#ffb900"/></svg></div>
  <div class="task open w51"><svg width="28" height="24" viewBox="0 0 28 24"><path d="M0 2Q0 0 2 0h10l2 3H0z" fill="#e0a000"/><path d="M0 5 12 5 15 2h11q2 0 2 2v18H0z" fill="#ffd75e"/><path d="M5 23.500V15q0-2.500 2.500-2.500h13Q23 12.500 23 15v8.500h-5V18h-8v5.500z" fill="#3d9be0"/></svg></div>
  <div class="task open w51 chrome"><svg width="28" height="28" viewBox="0 0 28 28"><circle cx="14" cy="14" r="14" fill="#e04a3c"/><path d="M14 14 1.900 7A14 14 0 0 0 12.500 27.900L19 17z" fill="#1f9d58"/><path d="M14 8h12.700A14 14 0 0 1 12.500 27.900L20 17z" fill="#ffcd40"/><circle cx="14" cy="14" r="6.400" fill="#fff"/><circle cx="14" cy="14" r="5.100" fill="#4a8af4"/></svg></div>
  <div class="task open current"><svg width="30" height="30"><use href="#logo"/></svg></div>
  <div class="tray">
    <svg width="16" height="9" viewBox="0 0 16 9"><path d="M0 8.500 8 .8l8 7.700" fill="none" stroke="#fff" stroke-width="1.300"/></svg>
    <svg class="bt" width="16" height="20" viewBox="0 0 16 20"><rect width="16" height="20" rx="7" fill="#0a84f0"/><path d="M4.500 6.500l7 7L8 17V3l3.500 3.500-7 7" fill="none" stroke="#fff" stroke-width="1.300"/></svg>
    <svg width="20" height="20" viewBox="0 0 20 20"><path d="M9.500.5C7 2.500 4 3 .8 3c0 8 2 13 8.700 16C16 16 18.500 11 18.500 3c-3 0-6-.5-9-2.500z" fill="#fff" stroke="#111"/><path d="M9.500 1v17M1 9.500h17" stroke="#111" stroke-width="1.300"/><circle cx="14.500" cy="14.500" r="5.300" fill="#128a3e"/><path d="M12 14.500l2 2 3.200-3.500" fill="none" stroke="#fff" stroke-width="1.300"/></svg>
    <svg width="20" height="14" viewBox="0 0 20 14"><path d="M6.500 4.500h10v6h-10z" fill="#fff"/><path d="M4.500 7v5.500h14V2.500H7M19.500 5.500v4" fill="none" stroke="#fff"/><path d="M1.500 0v3M4.500 0v3M.5 3.500h5v2l-1 1.500h-3l-1-1.500zM3 7v5.500" fill="none" stroke="#fff"/></svg>
    <svg width="21" height="16" viewBox="0 0 21 16"><path d="M.5 5.500h3l4-4v13l-4-4h-3z" fill="none" stroke="#fff" stroke-width="1.200"/><path d="M10.500 6c1 1.500 1 3 0 4.500M13.500 4c2 2.500 2 6 0 8.500" fill="none" stroke="#fff"/><path d="M16.500 1c4 4 4 10 0 14" fill="none" stroke="#888"/></svg>
    <svg class="wifi" width="16" height="16" viewBox="0 0 16 16"><path d="M.5 15.500C1 6 7 1 15.500.8M4.500 15.500C5 8.500 9 5 15.500 4.800M8.500 15.500C9 11 11.500 9 15.500 8.800" fill="none" stroke="#ccc" stroke-width="1.300"/><circle cx="13.500" cy="13.500" r="2" fill="#fff"/></svg>
    <svg width="18" height="18" viewBox="0 0 18 18"><circle cx="9" cy="9" r="8.700" fill="#a0a0a0"/><path d="M4.800 4.800l8.400 8.400M13.200 4.800l-8.400 8.400" stroke="#222" stroke-width="2.300"/></svg>
  </div>
  <div class="clock"><span>12:52</span><span>2020/9/10</span></div>
  <svg class="notes" width="32" height="32" viewBox="0 0 32 32"><path d="M1 2h20v16H12l-5 5v-5H1z" fill="#fff"/><path d="M5 6.500h12M5 10h12M5 13.500h9" stroke="#222" stroke-width="1.200"/><circle cx="20.500" cy="21" r="10" fill="#2b2726" stroke="#999"/><text x="20.500" y="26" text-anchor="middle" class="note-n">6</text></svg>
  <i class="peek"></i>
</footer>
</body>
</html>
```
FILE: styles.css
```css
* { box-sizing: border-box; }
body { margin: 0; width: 1920px; height: 1080px; overflow: hidden; display: flex; flex-direction: column; background: #dfe8f5; color: #000; font: 12px/16px "DejaVu Sans Condensed", "DejaVu Sans", sans-serif; font-stretch: condensed; letter-spacing: .35px; }
svg { display: block; flex: none; overflow: hidden; letter-spacing: 0; }
.spill { overflow: visible; }
.defs { position: absolute; }
button { font: inherit; letter-spacing: inherit; padding: 0; }

.w32 { width: 32px; } .w34 { width: 34px; } .w35 { width: 35px; } .w36 { width: 36px; } .w37 { width: 37px; } .w38 { width: 38px; }
.w40 { width: 40px; } .w42 { width: 42px; } .w45 { width: 45px; } .w46 { width: 46px; } .w47 { width: 47px; } .w49 { width: 49px; }
.w51 { width: 51px; } .w54 { width: 54px; } .w55 { width: 55px; } .w57 { width: 57px; } .w58 { width: 58px; } .w59 { width: 59px; }
.w60 { width: 60px; } .w61 { width: 61px; } .w66 { width: 66px; } .w70 { width: 70px; } .w83 { width: 83px; }
.w98 { width: 98px; } .w110 { width: 110px; }

/* title bar */
.titlebar { height: 29px; flex: none; background: #7f745f; display: grid; grid-template-columns: 28px 1fr 170px 1fr; align-items: start; }
.app-logo { margin-left: 1px; }
.quick { display: flex; gap: 7px; margin: 3px 0 0 0; padding-left: 6px; position: relative; }
.quick::before { content: ""; position: absolute; left: -1px; top: 1px; width: 3px; height: 14px; background: #a09a8c; border-right: 1px solid #5c5444; }
.quick-more { margin: 6px 0 0 0; }
.app-title { font: 16px/28px "Open Sans", sans-serif; letter-spacing: -.4px; color: #111; text-align: center; padding-left: 14px; }
.winbtns { display: flex; justify-content: flex-end; gap: 47px; padding: 4px 24px 0 0; }

/* ribbon tabs */
.tabs { height: 30px; flex: none; display: flex; align-items: flex-start; background: #dfe8f5; border-bottom: 1px solid #b4c5de; color: #1e395b; line-height: 32px; }
.tab-menu { width: 70px; height: 28px; margin: 1px 14px 0 1px; border: 1px solid #6a8cc8; border-radius: 2px; background: linear-gradient(#4d85c6, #2f6db5 46%, #16468c 50%, #3d93d0 92%, #6cc0ec); color: #fff; text-align: center; line-height: 28px; }
.tab-list { display: flex; gap: 22px; width: 421px; }
.tab-list span { display: flex; justify-content: center; white-space: nowrap; }
.tab-active { width: 59px; height: 30px; margin: 1px 0 -1px; border: 1px solid #b4c5de; border-bottom: 0; border-radius: 3px 3px 0 0; background: #f8fbff; line-height: 29px; text-align: center; box-shadow: 1px 0 #c8d6ea; }
.tab-last { margin-left: 13px; }
.tab-right { margin-left: auto; display: flex; align-items: center; height: 28px; padding-right: 6px; }
.help { margin-left: 9px; }
.options { margin: 0 10px 0 12px; }
.opt-arrow { margin-right: 10px; }

/* ribbon */
.ribbon { height: 105px; flex: none; display: flex; background: linear-gradient(#f8fcff, #dfe9f5 46%, #dbe5f3 60%, #dde8f6); border-bottom: 2px solid #b9c9de; }
.group { display: flex; flex-direction: column; justify-content: space-between; border-right: 1px solid #a5bad6; margin: 5px 0; padding-top: 2px; height: 94px; }
.items { display: flex; gap: 10px; }
.item { display: flex; flex-direction: column; align-items: center; white-space: nowrap; color: #1e395b; text-align: center; }
.item span { margin-top: 7px; }
.caption { text-align: center; color: #7b8aa3; line-height: 17px; }
.g1 { width: 134px; } .g1 .items { padding-left: 13px; }
.g2 { width: 672px; } .g2 .items { padding-left: 9px; gap: 9.8px; }
.g3 { width: 96px; } .g4 { width: 57px; } .g4 .items { padding-left: 9px; }
.g5 { width: 94px; } .g6 { width: 285px; } .g6 .items { padding-left: 9px; }
.minis { display: grid; gap: 9px 4px; padding: 5px 0 0 5px; }
.two { grid-template-columns: 24px 24px; padding-left: 20px; }
.three { grid-template-columns: 24px 24px 24px; }
.mini { width: 24px; height: 24px; border: 1px solid #a9bedc; border-radius: 2px; display: flex; align-items: center; justify-content: center; background: linear-gradient(#eef4fc, #e2ebf7); }
.icon-text { font: 700 18px "Open Sans", sans-serif; fill: #111; }
.icon-text.small { font-size: 9px; }
.wheelbox { width: 20px; height: 20px; margin: 10px 0 2px; background: #111; display: flex; align-items: center; justify-content: center; }
.wheel { width: 18px; height: 18px; border-radius: 50%; background: radial-gradient(#fff, #fff0 70%), conic-gradient(from 90deg, #f00, #f0f, #00f, #0ff, #0f0, #ff0, #f00); }

/* menu bar */
.menubar { height: 25px; flex: none; display: flex; align-items: center; padding-top: 1px; background: linear-gradient(#f8fbff, #ecf4fa 50%, #def0f8); border-bottom: 1px solid #a0b0c4; }
.menubar span { white-space: nowrap; display: flex; align-items: center; padding-top: 1px; }
.menubar b { border: 2.5px solid transparent; border-top: 3px solid #4a6080; border-bottom: 0; }
.pale b { border-top-color: #b0bccc; }
.grip { width: 2px; height: 15px; margin: 0 13px 0 4px; background: repeating-linear-gradient(#6f95cc 0 2px, transparent 2px 4px); }

/* work area */
.work { height: 716px; flex: none; display: flex; background: #a9c3e8; }
.panel { width: 504px; background: #dfe8f5; display: flex; flex-direction: column; }
.panel-head { height: 26px; display: flex; align-items: center; padding: 0 5px; gap: 8px; color: #1a4080; background: linear-gradient(#e2efff, #c4dcff 50%, #b0d0fe); }
.panel-head span { flex: 1; padding-top: 1px; }
.panel-head svg { margin-top: -2px; }
.panel-tab { width: 75px; height: 23px; margin: 2px 0 0 2px; padding: 2px 3px 0 2px; background: #87a9d8; color: #1b3f8c; text-align: center; line-height: 22px; }
.panel-tab div { background: linear-gradient(#f6faff, #e4eefa); height: 21px; border-radius: 2px 2px 0 0; padding-right: 2px; }
.panel-body { width: 500px; height: 664px; margin-left: 2px; border: 1px solid #86a8de; box-shadow: inset 1px 1px #f8fbff; display: flex; justify-content: space-between; }
.form-col { width: 229px; padding: 11px 0 0 1px; }
.frame { height: 591px; width: 227px; border: 1px solid #999; box-shadow: 1px 1px #fff, inset 1px 1px #fff; display: flex; flex-direction: column; }
.sec { padding-left: 4px; margin-right: 2px; border-bottom: 1px solid #999; box-shadow: 0 1px #fff; }
.s1 { height: 212px; padding-top: 14px; } .s2 { height: 198px; padding-top: 13px; } .s3 { height: 145px; padding-top: 13px; }
.sec > label { display: block; margin-bottom: 1px; }
.s4 { border: 0; box-shadow: none; display: flex; align-items: center; gap: 6px; height: 33px; }
.check { width: 13px; height: 13px; margin-top: -1px; border: 1px solid #a9b8cc; background: linear-gradient(135deg, #dfe4ea, #fff); box-shadow: inset 0 0 0 1px #f4f6f9; }
.listbox { width: 212px; border: 1px solid #7f858e; background: #fff; padding: 1px; color: #00107c; overflow: hidden; white-space: nowrap; letter-spacing: .38px; }
.l1 { height: 171px; display: flex; flex-direction: column; justify-content: space-between; }
.row { height: 18px; line-height: 18px; padding-left: 3px; overflow: hidden; }
.row.sel { background: #3399ff; color: #fff; }
.hscroll { display: flex; align-items: center; height: 21px; background: linear-gradient(#f7f7f7, #eaeaea 50%, #f4f4f4); padding: 0 7px 0 8px; }
.hscroll .end { margin-left: auto; }
.thumb { display: flex; align-items: center; justify-content: center; border: 1px solid #8f8f93; border-radius: 2px; background: linear-gradient(#fbfbfb, #e6e6e8 48%, #d2d2d5 52%, #c6c6ca); }
.t1 { width: 69px; height: 19px; margin-left: 7px; }
.t2 { width: 134px; height: 19px; margin-left: 7px; }
.l2 { height: 98px; display: grid; grid-template: 73px 21px / 187px 21px; background: #fff; }
.l2 .rows { padding-top: 1px; overflow: hidden; }
.l2 .row.sel { margin: -1px 0 1px; }
.vscroll, .panel-scroll { display: flex; flex-direction: column; align-items: center; background: linear-gradient(90deg, #f4f4f4, #ececec 50%, #f8f8f8); }
.vscroll { justify-content: space-between; padding: 7px 0 7px; }
.vscroll .thumb { width: 19px; height: 22px; margin-top: 9px; }
.vscroll .thumb, .panel-scroll .thumb { background: linear-gradient(90deg, #fbfbfb, #e6e6e8 48%, #d2d2d5 52%, #c0c0c6); }
.quantity { display: flex; align-items: center; margin-top: 16px; }
.quantity label { width: 78px; }
.combo { width: 78px; height: 27px; border: 1px solid #606060; border-radius: 3px; background: linear-gradient(#f4f4f4, #ececec 50%, #dcdcdc 55%, #d0d0d0); box-shadow: inset 0 0 0 1px #fafafa; display: flex; align-items: center; justify-content: center; gap: 4px; white-space: nowrap; }
.l3 { height: 98px; padding: 2px 1px; }
.apply { display: block; margin: 18px 0 0 68px; width: 88px; height: 21px; border: 1px solid #3c7fb1; border-radius: 3px; background: linear-gradient(#f4f4f4, #e8eaec 48%, #d4d6d8 52%, #cfd1d3); box-shadow: inset 0 0 0 1px #40d0f8; line-height: 22px; }
.panel-scroll { width: 20px; margin: 1px 2px 1px 0; padding: 8px 0 8px; justify-content: space-between; }
.panel-scroll .thumb { width: 19px; height: 531px; margin: 87px 0 0; }

.viewport { width: 1411px; margin-left: 4px; border-left: 1px solid #8d8d8d; display: flex; flex-direction: column; }
.doc-tabs { height: 28px; background: #87a9d8; border-bottom: 1px solid #f0bc70; }
.doc-tab { position: relative; width: 384px; height: 28px; display: flex; align-items: center; padding-left: 10px; }
.doc-shape { position: absolute; left: -1px; top: 0; }
.doc-tab > :not(.doc-shape) { position: relative; }
.doc-tab span { margin: 1px 15px 0 5px; white-space: nowrap; width: 295px; }
.doc-strip { height: 14px; background: linear-gradient(#a8c4e4, #b4cbe6); border-bottom: 1px solid #000; }
.scene { background: linear-gradient(#0099ff, #003ccd); }
.scene text { font-family: "Liberation Sans", Arial, sans-serif; }
.scene-title { font-size: 20px; fill: #fff; }
.load { font-size: 16px; } .cyan { fill: #0ff; } .yellow { fill: #ff0; }
.value { font-size: 20px; fill: #fff; stroke: #fff; stroke-width: .4px; }
.nodes { font-size: 16px; fill: #f00; }

/* command dock */
.dock { height: 97px; flex: none; display: flex; border-top: 5px solid #b3d0f8; border-bottom: 1px solid #7f9bbc; background: #dfe8f5; }
.dock-side { width: 26px; background: linear-gradient(90deg, #e0edff, #b0d0fe); display: flex; flex-direction: column; align-items: center; padding: 4px 2px 0 0; gap: 8px; color: #1a4080; }
.dock-side span { writing-mode: vertical-rl; transform: rotate(180deg); margin-top: -8px; }
.dock-main { flex: 1; padding: 2px 2px 0 2px; }
.out-outer { height: 41px; border: 1px solid #86a8de; padding: 1px; background: #f4f8fc; }
.output { height: 37px; border: 1px solid #707070; display: grid; grid-template: 14px 21px / 1fr 21px; overflow: hidden; background: #dfe8f5; }
.out-line { background: #0078d7; color: #fff; border-left: 4px solid #fff; line-height: 18px; overflow: hidden; white-space: nowrap; letter-spacing: .41px; }
.out-spin { background: #f0f0f0; display: flex; flex-direction: column; align-items: center; gap: 1px; padding-top: 1px; }
.t3 { width: 1729px; height: 19px; margin-left: 7px; }
.dock-tabs { height: 23px; display: flex; align-items: flex-start; width: 279px; background: #87a9d8; color: #1b3f8c; margin-top: -1px; padding-left: 2px; }
.dt-active { width: 125px; height: 22px; background: #f2f7fe; border-radius: 0 0 3px 3px; text-align: center; line-height: 24px; }
.dt { padding-left: 18px; line-height: 22px; }
.cmd-input { height: 22px; margin-top: 2px; border: 1px solid #a9bbd2; background: #f3f6fc; }

/* status bar */
.status { height: 28px; flex: none; border-top: 2px solid #f4f8fc; background: linear-gradient(#d8e4f4, #b0c2d6); display: flex; justify-content: flex-end; align-items: flex-start; padding-top: 4px; }
.status svg:first-child { margin: 0 13px 0 0; padding: 0; box-shadow: -5px 0 0 -4px #fff; }
.resize { margin: 10px 0 0 13px; }

/* taskbar */
.taskbar { height: 50px; flex: none; display: flex; align-items: stretch; background: linear-gradient(90deg, #212121, #1f1d1c 520px, #2c2824 620px, #453e35 740px, #4b4238 800px, #3f3331 910px, #1d1d1c 985px, #1f1d1e 1110px, #3c3b34 1140px, #5b5a50 1180px, #64655c 1220px, #64574c 1310px, #4a4038 1400px, #423c38 1500px, #352d2a 1700px, #2c2726); }
.task { display: flex; align-items: center; justify-content: center; }
.store { width: 67px; margin-right: 4px; }
.open { border-bottom: 3px solid #c8ab88; padding-top: 1px; }
.chrome { margin: 0 6px 0 11px; }
.current { width: 61px; background: linear-gradient(90deg, #4e4e4e 56px, #3c3c3c 56px); padding-right: 2px; }
.tray { margin-left: auto; display: flex; align-items: center; gap: 11px; }
.bt { margin: 0 1px 0 2px; }
.wifi { margin-left: 1px; }
.clock { width: 78px; margin-left: 12px; display: flex; flex-direction: column; align-items: center; color: #fff; font: 15px/23px "Open Sans", sans-serif; padding-top: 2px; letter-spacing: 0; }
.notes { margin: 13px 14px 0 22px; }
.note-n { font: bold 14px "Open Sans", sans-serif; fill: #fff; }
.peek { border-left: 1px solid #77706c; width: 5px; }
```
